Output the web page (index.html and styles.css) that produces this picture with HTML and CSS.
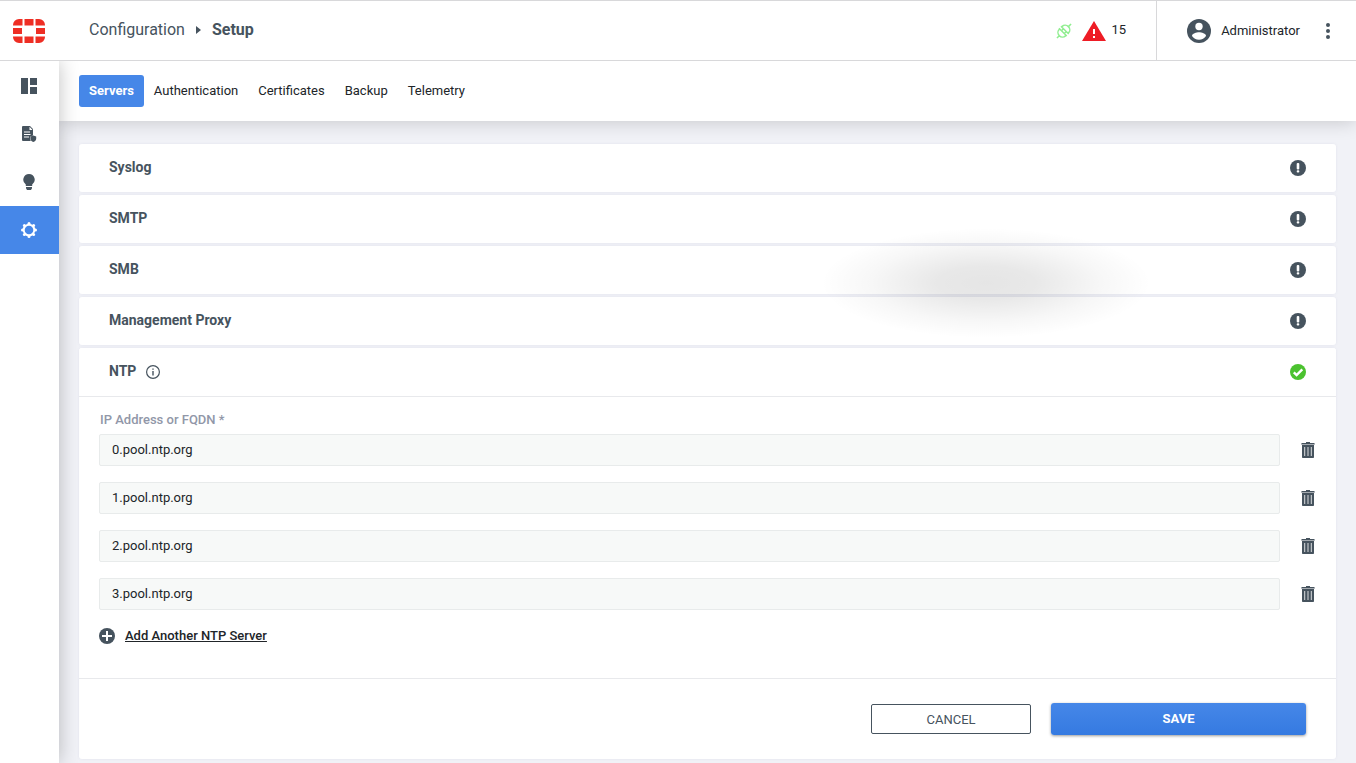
FILE: index.html
```html
<!DOCTYPE html>
<html lang="en">
<head>
    <meta charset="UTF-8">
    <meta name="viewport" content="width=device-width, initial-scale=1.0">
    <title>Configuration - Setup</title>
    <link rel="stylesheet" href="styles.css">
</head>
<body>

<!-- Icons used more than once -->
<svg class="sprite" width="0" height="0" aria-hidden="true">
    <symbol id="icon-alert" viewBox="0 0 16 16">
        <circle cx="8" cy="8" r="8" fill="#46535e"/>
        <rect x="6.700" y="3" width="2.600" height="6.500" rx="1" fill="#fff"/>
        <rect x="6.700" y="10.300" width="2.600" height="2.200" rx="1" fill="#fff"/>
    </symbol>
    <symbol id="icon-trash" viewBox="0 0 14 16">
        <path fill="#46535e" d="M5 0h4v1h4.500v2H.5V1H5zM1 3h12v12.200a.8.8 0 0 1-.8.8H1.800a.8.8 0 0 1-.8-.8z"/>
        <path fill="#fff" opacity=".5" d="M.5 2h13v1H.5z"/>
        <path fill="#fff" opacity=".8" d="M3.200 5h1v9h-1zM6.500 5h1v9h-1zM9.800 5h1v9h-1z"/>
    </symbol>
</svg>

<header class="topbar">
    <a class="logo" href="#" aria-label="Home">
        <svg width="32" height="24" viewBox="0 0 32 24" fill="#ee2e24">
            <path d="M6 0h3.500v6.500H0V6a6 6 0 0 1 6-6zM11.500 0h9v6.500h-9zM22.500 0H26a6 6 0 0 1 6 6v.5h-9.500zM0 9h9v6H0zM23 9h9v6h-9zM0 17.500h9.500V24H6a6 6 0 0 1-6-6zM11.500 17.500h9V24h-9zM22.500 17.500H32v.5a6 6 0 0 1-6 6h-3.500z"/>
        </svg>
    </a>
    <nav class="breadcrumb" aria-label="Breadcrumb">
        <a href="#">Configuration</a>
        <svg width="5" height="8" viewBox="0 0 5 8"><path fill="#46535e" d="M0 0l5 4-5 4z"/></svg>
        <strong>Setup</strong>
    </nav>
    <div class="status">
        <svg width="16" height="16" viewBox="0 0 16 16" fill="none" stroke="#90ee90" stroke-width="1.500">
            <g transform="rotate(45 8 8)">
                <path d="M2.500 6.800h11M3.500 6.800V6a4.500 4.200 0 0 1 9 0v.8M2.500 9.600h11M3.500 9.600v.8a4.500 4.200 0 0 0 9 0v-.8M8 1.800V-2M8 14.600V18M6 6.800v2.800M10 6.800v2.800"/>
            </g>
        </svg>
        <svg class="warning" width="24" height="20" viewBox="0 0 24 20">
            <path fill="#ee1c25" d="M12 0l12 20H0z"/>
            <path fill="#fff" d="M11 8h2v5h-2zM11 15h2v2h-2z"/>
        </svg>
        <span>15</span>
    </div>
    <div class="user">
        <svg width="24" height="24" viewBox="0 0 24 24">
            <circle cx="12" cy="12" r="12" fill="#46535e"/>
            <circle cx="12" cy="7.500" r="3.700" fill="#fff"/>
            <path fill="#fff" d="M5 17c0-2.400 4.500-3.700 7-3.700s7 1.300 7 3.700c-1.500 2.300-4 3.700-7 3.700S6.500 19.300 5 17z"/>
        </svg>
        <span>Administrator</span>
        <button class="icon-button menu" aria-label="More options">
            <svg width="4" height="16" viewBox="0 0 4 16" fill="#46535e"><circle cx="2" cy="2" r="2"/><circle cx="2" cy="8" r="2"/><circle cx="2" cy="14" r="2"/></svg>
        </button>
    </div>
</header>

<div class="layout">
    <nav class="sidebar" aria-label="Main">
        <a href="#" aria-label="Dashboard">
            <svg width="16" height="16" viewBox="0 0 16 16" fill="#46535e"><path d="M0 0h7v16H0zM9 0h7v7H9zM9 9h7v7H9z"/></svg>
        </a>
        <a href="#" aria-label="Reports">
            <svg width="16" height="16" viewBox="0 0 16 16">
                <path fill="#46535e" d="M2 0h7l3 3v6.500l-3 1.200V13l.8 2H2a1 1 0 0 1-1-1V1a1 1 0 0 1 1-1z"/>
                <path fill="#fff" d="M8.500.8L11.600 4H8.500zM3 5.500h6v1H3zM3 8h6.500v1H3zM3 10.500h5v1H3z"/>
                <path fill="#46535e" d="M12.300 9.500l2.900 1v2.300c0 1.600-1.300 2.700-2.900 3.200-1.600-.5-2.900-1.600-2.900-3.200v-2.300z"/>
            </svg>
        </a>
        <a href="#" aria-label="Insights">
            <svg width="12" height="16" viewBox="0 0 12 16" fill="#46535e"><path d="M6 0a5.700 5.700 0 0 1 3.200 10.400V12H2.800v-1.600A5.700 5.700 0 0 1 6 0zM3 13h6v1.200L8 16H4l-1-1.800z"/></svg>
        </a>
        <a class="active" href="#" aria-label="Configuration">
            <svg width="16" height="16" viewBox="0 0 16 16" fill="#fff">
                <circle cx="8" cy="8" r="5.300" fill="none" stroke="#fff" stroke-width="2"/>
                <circle cx="8" cy="1.500" r="1.500"/>
                <circle cx="12.600" cy="3.400" r="1.500"/>
                <circle cx="14.500" cy="8" r="1.500"/>
                <circle cx="12.600" cy="12.600" r="1.500"/>
                <circle cx="8" cy="14.500" r="1.500"/>
                <circle cx="3.400" cy="12.600" r="1.500"/>
                <circle cx="1.500" cy="8" r="1.500"/>
                <circle cx="3.400" cy="3.400" r="1.500"/>
            </svg>
        </a>
    </nav>

    <div class="page">
        <nav class="tabs" aria-label="Setup sections">
            <a class="active" href="#">Servers</a>
            <a href="#">Authentication</a>
            <a href="#">Certificates</a>
            <a href="#">Backup</a>
            <a href="#">Telemetry</a>
        </nav>

        <main class="content">
            <section class="panel">
                <h2>Syslog</h2>
                <svg width="16" height="16"><use href="#icon-alert"/></svg>
            </section>
            <section class="panel">
                <h2>SMTP</h2>
                <svg width="16" height="16"><use href="#icon-alert"/></svg>
            </section>
            <section class="panel smudged">
                <h2>SMB</h2>
                <svg width="16" height="16"><use href="#icon-alert"/></svg>
            </section>
            <section class="panel">
                <h2>Management Proxy</h2>
                <svg width="16" height="16"><use href="#icon-alert"/></svg>
            </section>

            <section class="card">
                <div class="panel">
                    <h2>NTP</h2>
                    <svg class="info" width="14" height="14" viewBox="0 0 14 14">
                        <circle cx="7" cy="7" r="6.400" fill="none" stroke="#46535e" stroke-width="1.200"/>
                        <path fill="#46535e" d="M6.300 3.500h1.400v1.300H6.300zM6.300 6h1.400v4.500H6.300z"/>
                    </svg>
                    <svg width="16" height="16" viewBox="0 0 16 16">
                        <circle cx="8" cy="8" r="8" fill="#4bc22f"/>
                        <path fill="none" stroke="#fff" stroke-width="2.400" d="M3.800 8.300l2.800 2.700 5.700-5.600"/>
                    </svg>
                </div>
                <form>
                    <div class="fields">
                        <label for="ntp0">IP Address or FQDN *</label>
                        <div class="field">
                            <input id="ntp0" type="text" value="0.pool.ntp.org">
                            <button type="button" class="icon-button" aria-label="Delete server 0"><svg width="14" height="16"><use href="#icon-trash"/></svg></button>
                        </div>
                        <div class="field">
                            <input type="text" aria-label="NTP server 1" value="1.pool.ntp.org">
                            <button type="button" class="icon-button" aria-label="Delete server 1"><svg width="14" height="16"><use href="#icon-trash"/></svg></button>
                        </div>
                        <div class="field">
                            <input type="text" aria-label="NTP server 2" value="2.pool.ntp.org">
                            <button type="button" class="icon-button" aria-label="Delete server 2"><svg width="14" height="16"><use href="#icon-trash"/></svg></button>
                        </div>
                        <div class="field">
                            <input type="text" aria-label="NTP server 3" value="3.pool.ntp.org">
                            <button type="button" class="icon-button" aria-label="Delete server 3"><svg width="14" height="16"><use href="#icon-trash"/></svg></button>
                        </div>
                        <a class="add" href="#">
                            <svg width="16" height="16" viewBox="0 0 16 16">
                                <circle cx="8" cy="8" r="8" fill="#46535e"/>
                                <path fill="#fff" d="M7 3h2v4h4v2H9v4H7V9H3V7h4z"/>
                            </svg>
                            <span>Add Another NTP Server</span>
                        </a>
                    </div>
                    <div class="actions">
                        <button type="button" class="cancel">CANCEL</button>
                        <button type="submit" class="save">SAVE</button>
                    </div>
                </form>
            </section>
        </main>
    </div>
</div>

</body>
</html>
```

FILE: styles.css
```css
* {
    box-sizing: border-box;
}

body {
    margin: 0;
    min-height: 100vh;
    display: flex;
    flex-direction: column;
    font-family: Roboto, "Liberation Sans", sans-serif;
    font-size: 13px;
    color: #212529;
    background-color: #f1f2f7;
}

a {
    color: inherit;
    text-decoration: none;
}

svg {
    display: block;
    flex-shrink: 0;
}

.sprite {
    position: absolute;
}

.icon-button {
    padding: 0;
    border: none;
    background: none;
    cursor: pointer;
}

/* Top bar */
.topbar {
    display: flex;
    align-items: center;
    flex-shrink: 0;
    height: 61px;
    border-top: 1px solid #d8d8da;
    border-bottom: 1px solid #d8d8da;
    background-color: #fff;
    position: relative;
    z-index: 3;
}

.logo {
    margin: 0 44px 0 13px;
}

.breadcrumb {
    display: flex;
    align-items: center;
    gap: 11px;
    flex: 1;
    padding-bottom: 2px;
    font-size: 16px;
    color: #46535e;
}

.status {
    display: flex;
    align-items: center;
    padding-right: 30px;
}

.status span {
    padding-bottom: 2px;
}

.status .warning {
    margin: 0 6px 0 10px;
}

.user {
    display: flex;
    align-items: center;
    align-self: stretch;
    gap: 10px;
    padding: 0 26px 0 30px;
    border-left: 1px solid #d8d8da;
}

.menu {
    margin-left: 16px;
}

.layout {
    display: flex;
    flex: 1;
}

/* Left navigation */
.sidebar {
    width: 59px;
    flex-shrink: 0;
    padding-top: 1px;
    background-color: #fff;
    box-shadow: 0 0 20px rgba(0, 0, 0, 0.25);
    position: relative;
    z-index: 2;
}

.sidebar a {
    display: flex;
    align-items: center;
    justify-content: center;
    height: 48px;
    padding-right: 1px;
}

.sidebar .active {
    background-color: #4687e8;
}

.page {
    flex: 1;
    min-width: 0;
}

.tabs {
    display: flex;
    align-items: center;
    height: 60px;
    padding: 0 20px;
    background-color: #fff;
    box-shadow: 0 0 20px rgba(0, 0, 0, 0.2);
}

.tabs a {
    padding: 0 10px;
    line-height: 32px;
}

.tabs .active {
    border-radius: 3px;
    font-weight: bold;
    color: #fff;
    background-color: #4687e8;
}

/* Panels */
.content {
    display: flex;
    flex-direction: column;
    gap: 3px;
    padding: 23px 20px 4px;
}

.panel {
    display: flex;
    align-items: center;
    justify-content: space-between;
    height: 48px;
    padding: 0 30px;
    border-radius: 3px;
    background-color: #fff;
    box-shadow: 0 0 3px rgba(70, 70, 110, 0.08);
}

.panel h2 {
    margin: 0;
    padding-bottom: 2px;
    font-size: 14px;
    font-weight: bold;
    color: #46535e;
}

/* Soft grey spot over the panels */
.smudged {
    position: relative;
}

.smudged::after {
    content: "";
    position: absolute;
    z-index: 1;
    top: -18px;
    left: 59%;
    width: 330px;
    height: 110px;
    background: radial-gradient(closest-side, rgba(0, 0, 0, 0.1), rgba(0, 0, 0, 0.09) 30%, rgba(0, 0, 0, 0.03) 70%, transparent);
}

.card {
    border-radius: 3px;
    background-color: #fff;
    box-shadow: 0 0 3px rgba(70, 70, 110, 0.08);
}

.card .panel {
    box-shadow: none;
}

.card .info {
    margin: 0 auto 0 10px;
}

.fields {
    display: flex;
    flex-direction: column;
    gap: 16px;
    padding: 15px 20px 32px;
    border-top: 1px solid #e8e9ec;
    border-bottom: 1px solid #e8e9ec;
}

.fields label {
    margin-bottom: -10px;
    padding-left: 1px;
    line-height: 16px;
    font-weight: 500;
    color: #9197a8;
}

.field {
    display: flex;
    align-items: center;
    gap: 20px;
}

.field .icon-button {
    display: flex;
    justify-content: center;
    width: 16px;
}

.field input {
    flex: 1;
    min-width: 0;
    height: 32px;
    padding: 0 12px 2px;
    border: 1px solid #e8ebeb;
    border-radius: 2px;
    font: inherit;
    color: inherit;
    background-color: #f7f9f8;
}

.add {
    display: flex;
    align-items: center;
    align-self: flex-start;
    gap: 10px;
    line-height: 20px;
    font-weight: 500;
}

.add span {
    text-decoration: underline;
}

.actions {
    display: flex;
    align-items: center;
    justify-content: flex-end;
    gap: 20px;
    height: 80px;
    padding: 0 30px;
}

.cancel {
    width: 160px;
    height: 30px;
    border: 1px solid #46535e;
    border-radius: 2px;
    font: inherit;
    color: #46535e;
    background-color: #fff;
    cursor: pointer;
}

.save {
    width: 255px;
    height: 32px;
    padding-bottom: 2px;
    border: none;
    border-radius: 3px;
    font: inherit;
    font-weight: bold;
    color: #fff;
    background: linear-gradient(#4687e8, #357ae1);
    box-shadow: 0 1px 3px rgba(0, 0, 0, 0.4);
    cursor: pointer;
}
```
